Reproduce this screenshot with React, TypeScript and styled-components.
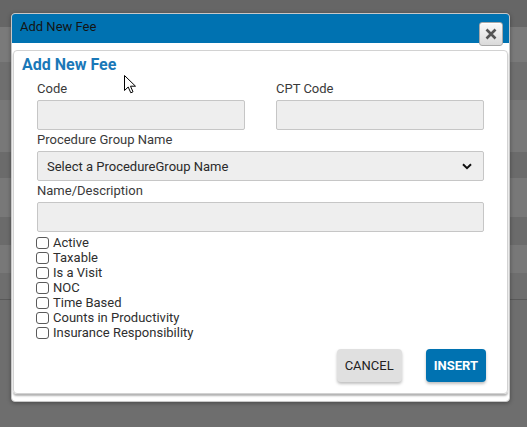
import styled, { createGlobalStyle } from 'styled-components';

const GlobalStyle = createGlobalStyle`
  html, body {
    margin: 0;
    padding: 0;
  }
  body {
    font-family: Roboto, "Liberation Sans", Arial, sans-serif;
    background: #6e6e6e;
  }
`;

const Page = styled.div`
  position: relative;
  width: 527px;
  height: 427px;
  overflow: hidden;
  background: #6e6e6e;
`;

const Backdrop = styled.div`
  display: flex;
  flex-direction: column;
`;

const BackRow = styled.div<{ h: number; tone: string; line?: boolean }>`
  height: ${({ h }) => h}px;
  background: ${({ tone }) => tone};
  border-bottom: ${({ line }) => (line ? '1px solid #595959' : 'none')};
`;

const Modal = styled.div`
  position: absolute;
  left: 11px;
  top: 13px;
  width: 497px;
  background: #fff;
  border: 1px solid #c8c8c8;
  border-radius: 4px;
  box-shadow: 0 1px 4px rgba(0, 0, 0, 0.35);
  overflow: hidden;
`;

const Header = styled.div`
  height: 29px;
  background: #0072b1;
  display: flex;
  align-items: center;
  justify-content: space-between;
  padding: 0 6px 0 8px;
`;

const HeaderTitle = styled.span`
  font-size: 13px;
  color: #141414;
  margin-top: -4px;
`;

const CloseButton = styled.button`
  width: 24px;
  height: 24px;
  margin-top: 10px;
  padding: 0;
  border: 1px solid #a9a9a9;
  border-radius: 3px;
  background: linear-gradient(#fafafa, #dadada);
  display: flex;
  align-items: center;
  justify-content: center;
  box-shadow: inset 0 1px 0 #fff;
`;

const Body = styled.div`
  padding: 7px 1px 7px 1px;
`;

const Card = styled.div`
  border: 1px solid #d2d2d2;
  border-radius: 4px;
  box-shadow: 0 2px 2px rgba(0, 0, 0, 0.3);
  padding: 4px 21px 11px 8px;
`;

const Heading = styled.h2`
  margin: 0;
  font-size: 16px;
  line-height: 20px;
  font-weight: 700;
  color: #1a78b8;
`;

const Form = styled.div`
  padding-left: 15px;
  padding-right: 2px;
  margin-top: 6px;
`;

const TwoCols = styled.div`
  display: grid;
  grid-template-columns: 208px 208px;
  column-gap: 31px;
`;

const Field = styled.div<{ gap?: number }>`
  display: flex;
  flex-direction: column;
  margin-bottom: ${({ gap }) => gap ?? 2}px;
`;

const Label = styled.label`
  font-size: 13px;
  line-height: 16px;
  color: #3a3a3a;
  margin-bottom: 3px;
`;

const TextInput = styled.input`
  box-sizing: border-box;
  height: 30px;
  width: 100%;
  background: #eeeeee;
  border: 1px solid #c6c6c6;
  border-radius: 2px;
  padding: 0 8px;
  font: inherit;
  font-size: 13px;
`;

const SelectBox = styled.div`
  box-sizing: border-box;
  height: 30px;
  width: 100%;
  background: #eeeeee;
  border: 1px solid #c6c6c6;
  border-radius: 2px;
  padding: 0 11px 0 9px;
  display: flex;
  align-items: center;
  justify-content: space-between;
  font-size: 13px;
  color: #2a2a2a;
`;

const Checks = styled.div`
  display: flex;
  flex-direction: column;
  margin-top: 3px;
`;

const CheckRow = styled.label`
  display: flex;
  align-items: center;
  height: 15px;
  font-size: 13px;
  color: #2e2e2e;
`;

const Box = styled.input`
  appearance: none;
  box-sizing: border-box;
  width: 13px;
  height: 12px;
  margin: 0 4px 0 -1px;
  border: 1px solid #5a5a5a;
  border-radius: 3px;
  background: #fff;
`;

const Actions = styled.div`
  display: flex;
  justify-content: flex-end;
  gap: 24px;
  margin-top: 9px;
`;

const Button = styled.button<{ primary?: boolean }>`
  height: 33px;
  border: none;
  border-radius: 4px;
  font-family: inherit;
  font-size: 13px;
  font-weight: ${({ primary }) => (primary ? 700 : 400)};
  color: ${({ primary }) => (primary ? '#fff' : '#222')};
  background: ${({ primary }) => (primary ? '#0072b1' : '#e0e0e0')};
  padding: 0 8px;
  box-shadow: 0 2px 3px rgba(0, 0, 0, 0.25);
`;

const Cursor = styled.svg`
  position: absolute;
  left: 124px;
  top: 75px;
`;

const rows: { h: number; tone: string; line?: boolean }[] = [
  { h: 27, tone: '#666666' },
  { h: 35, tone: '#7a7a7a' },
  { h: 38, tone: '#6f6f6f' },
  { h: 52, tone: '#787878' },
  { h: 26, tone: '#6b6b6b' },
  { h: 39, tone: '#787878' },
  { h: 28, tone: '#6b6b6b' },
  { h: 28, tone: '#787878' },
  { h: 26, tone: '#6e6e6e', line: true },
];

const checks = [
  'Active',
  'Taxable',
  'Is a Visit',
  'NOC',
  'Time Based',
  'Counts in Productivity',
  'Insurance Responsibility',
];

export default function App() {
  return (
    <Page>
      <GlobalStyle />
      <Backdrop>
        {rows.map((r, i) => (
          <BackRow key={i} h={r.h} tone={r.tone} line={r.line} />
        ))}
      </Backdrop>

      <Modal>
        <Header>
          <HeaderTitle>Add New Fee</HeaderTitle>
          <CloseButton aria-label="close">
            <svg width="12" height="12" viewBox="0 0 12 12">
              <path d="M1.5 1.5 L10.5 10.5 M10.5 1.5 L1.5 10.5" stroke="#555" strokeWidth="2.6" />
            </svg>
          </CloseButton>
        </Header>
        <Body>
          <Card>
            <Heading>Add New Fee</Heading>
            <Form>
              <TwoCols>
                <Field>
                  <Label>Code</Label>
                  <TextInput />
                </Field>
                <Field>
                  <Label>CPT Code</Label>
                  <TextInput />
                </Field>
              </TwoCols>
              <Field>
                <Label>Procedure Group Name</Label>
                <SelectBox>
                  <span>Select a ProcedureGroup Name</span>
                  <svg width="10" height="7" viewBox="0 0 10 7">
                    <path d="M1 1.2 L5 5.2 L9 1.2" stroke="#111" strokeWidth="2" fill="none" />
                  </svg>
                </SelectBox>
              </Field>
              <Field gap={0}>
                <Label>Name/Description</Label>
                <TextInput />
              </Field>
              <Checks>
                {checks.map((c) => (
                  <CheckRow key={c}>
                    <Box type="checkbox" />
                    {c}
                  </CheckRow>
                ))}
              </Checks>
            </Form>
            <Actions>
              <Button>CANCEL</Button>
              <Button primary>INSERT</Button>
            </Actions>
          </Card>
        </Body>
      </Modal>

      <Cursor width="13" height="19" viewBox="0 0 13 19">
        <path d="M0.5 0.5 L0.5 15.5 L4.2 12 L6.8 17.8 L9 16.8 L6.5 11.2 L11.5 11.2 Z" fill="#fff" stroke="#000" strokeWidth="1" />
      </Cursor>
    </Page>
  );
}
